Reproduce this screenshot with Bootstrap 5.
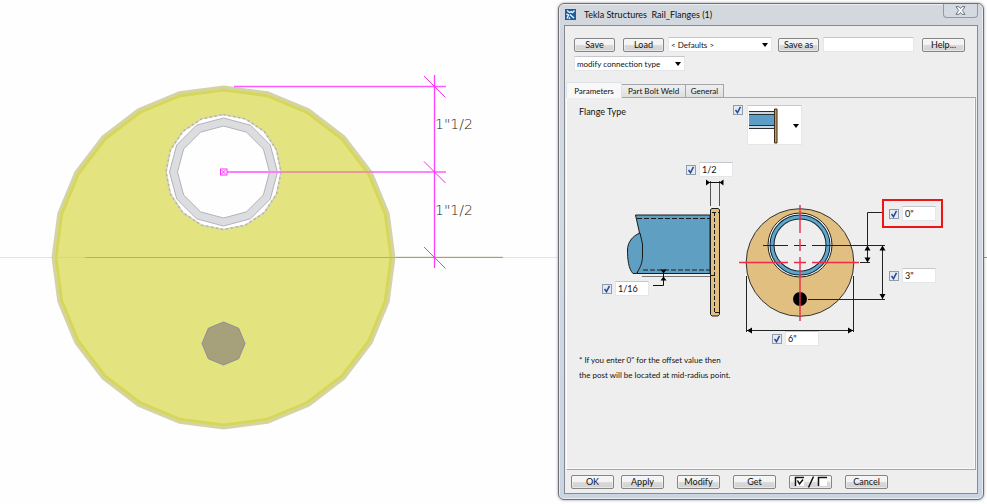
<!DOCTYPE html>
<html lang="en">
<head>
<meta charset="utf-8">
<meta name="viewport" content="width=device-width, initial-scale=1">
<title>Tekla Structures Rail_Flanges (1)</title>
<link href="https://cdn.jsdelivr.net/npm/bootstrap@5.3.0/dist/css/bootstrap.min.css" rel="stylesheet">
<style>
  body { background: #fefefe; color: #111; font: 9px/14px Lato, sans-serif; }
  .workspace { min-height: 100vh; }
  .model-view { flex: 558 1 0; min-width: 0; }
  .model-view svg { width: 100%; height: 100vh; }
  .dialog-side { flex: 429 1 0; min-width: 429px; }
  .dialog-side::after { content: ""; position: absolute; right: 0; top: 257px; width: 3px; height: 1px; background: #e85a8a; }
  .dlg { margin: 3px 3px 4px 0; border: 1px solid #6c7076; border-radius: 6px; padding: 0 5px 5px; background: linear-gradient(#d3d7de, #d3dae3 40%, #c9d5e2); box-shadow: 0 0 3px #9a9a9a, inset 0 0 0 1px #e9edf2; }
  .title-bar { height: 21px; padding-left: 1px; }
  .title-bar h1 { font-size: 9px; line-height: 14px; font-weight: 400; white-space: pre; }
  .close-btn { width: 35px; height: 14px; border: 1px solid #8f9aa8; border-top: 0; border-radius: 0 0 4px 4px; background: #d5dae2; }
  .client { border: 1px solid #858a92; background: #eee; padding: 11px 1px 4px; }
  .tool-row { padding: 0 11px 0 8px; }
  .ui-btn { --bs-btn-padding-x: 0; --bs-btn-padding-y: 0; --bs-btn-font-size: 9px; --bs-btn-line-height: 12px; --bs-btn-border-radius: 2px; --bs-btn-border-color: #858585; --bs-btn-color: #111; height: 14px; width: 43px; background: linear-gradient(#f4f4f4 45%, #d9d9d9 55%, #d2d2d2); box-shadow: inset 0 0 0 1px #fafafa88; display: inline-flex; align-items: center; justify-content: center; }
  .top-btn { width: 41px; }
  .ui-select, .ui-field { height: 15px; min-height: 0; border: 1px solid #e4e6e9; border-top-color: #c4c8cd; border-radius: 0; background-color: #fff; color: #111; font-size: 9px; line-height: 12px; padding: 0 2px; }
  .ui-select { font-size: 8px; background-image: url("data:image/svg+xml,%3Csvg xmlns='http://www.w3.org/2000/svg' viewBox='0 0 6 4'%3E%3Cpath d='M0 0h6L3 4z' fill='%23000'/%3E%3C/svg%3E"); background-position: right 3px center; background-size: 6px 4px; padding-right: 12px; }
  .sel-defaults { width: 104px; }
  .sel-modify { width: 111px; }
  .field-save { width: 91px; }
  .tab-strip { padding: 11px 0 0 0; border: 0; }
  .tab-strip .nav-link { min-width: 39px; border: 1px solid #a3a6ab; border-bottom: 0; border-radius: 0; margin: 2px 0 0 -1px; padding: 0 4px; height: 13px; font-size: 8px; line-height: 13px; color: #111; background: linear-gradient(#f0f0f0, #dedede); }
  .tab-strip .nav-link.active { position: relative; min-width: 56px; height: 16px; margin: 0 0 -1px; line-height: 14px; background: #f8f8f8; color: #111; }
  .tab-strip .tab-wide { min-width: 65px; }
  .tab-page { border: 1px solid #a3a6ab; border-left-color: #fff; box-shadow: inset -1px -1px #fafafa; background: #eee; }
  .flange-row { padding: 7px 12px 0; height: 52px; }
  .flange-row .flange-name { width: 154px; }
  .ui-check.ui-check[type=checkbox] { width: 10px; height: 10px; flex: none; border: 1px solid #929baa; border-radius: 0; background-color: #e4eaf3; }
  .dim .ui-check { margin: 0; }
  .ui-check.ui-check[type=checkbox]:checked { background-size: 8px 8px; background-image: url("data:image/svg+xml,%3Csvg xmlns='http://www.w3.org/2000/svg' viewBox='0 0 8 8'%3E%3Cpath d='M1.5 4l2 2.700L6.500.8' fill='none' stroke='%23284a94' stroke-width='1.500'/%3E%3C/svg%3E"); }
  .type-picker { width: 55px; height: 40px; padding: 0; border: 1px solid #e4e6e9; border-top-color: #c4c8cd; background: #fff; }
  .stage { width: 400px; height: 200px; }
  .dim { position: absolute; display: flex; align-items: center; gap: 3px; }
  .dim .ui-field { width: 34px; }
  .dim-plate { left: 119px; top: 12px; }
  .dim-gap { left: 35px; top: 131px; }
  .dim-offset { left: 315px; top: 49px; padding: 5px; border: 2px solid #f01414; }
  .dim-bolt { left: 322px; top: 118px; }
  .dim-dia { left: 205px; top: 181px; }
  .hint { padding: 3px 12px; font-size: 8px; line-height: 15px; }
  .footer-row { padding: 5px 5px 0; gap: 13px; }
  .footer-pair { gap: 7px; }
  .cad-text { font: 14px "DejaVu Sans Light", "DejaVu Sans", sans-serif; fill: #222; }
</style>
<script src="https://cdn.jsdelivr.net/npm/bootstrap@5.3.0/dist/js/bootstrap.bundle.min.js"></script>
</head>
<body>
<div class="workspace d-flex">
  <main class="model-view">
    <svg class="d-block" viewBox="0 0 558 504" preserveAspectRatio="xMinYMin meet" role="img" aria-label="Flange model view">
      <path d="M0 257.5H558" stroke="#e3e3e3"/>
      <g id="plate"></g>
      <path d="M85 257.5H396" stroke="#d9a552"/><path d="M396 257.5H503" stroke="#ec7a74"/>
      <path d="M396 256.5H503" stroke="#e8e2d0" opacity=".6"/>
      <path d="M234 86.5H446M372 172H446" stroke="#ff5cff" stroke-width="1.5"/>
      <path d="M227 172H281" stroke="#ff7cff" stroke-width="2"/>
      <path d="M281 172H372" stroke="#e59c94" stroke-width="2"/>
      <path d="M434.5 75V268" stroke="#ff40ff" stroke-width="1.3"/>
      <path d="M424 76l21.500 21.500M424 161.500l21.500 21.500M424 247l21.500 21.500" stroke="#f22cf2"/>
      <g fill="none" stroke="#ff30ff"><rect x="220.500" y="169" width="6.500" height="6"/><path d="M221.500 170l4 4M225.500 170l-4 4"/></g>
      <text class="cad-text" x="435" y="129">1"1/2</text>
      <text class="cad-text" x="435" y="215">1"1/2</text>
    </svg>
  </main>

  <section class="dialog-side d-flex position-relative" aria-label="Rail flanges dialog">
    <div class="dlg d-flex flex-column flex-grow-1">
      <header class="title-bar d-flex justify-content-between">
        <div class="d-flex align-items-center gap-1">
          <svg width="11" height="11" viewBox="0 0 11 11" aria-hidden="true"><path fill="#1c5b9c" d="M0 0h11v11H0z"/><path d="M2 1.500l2.500 2L7 2.500M9.500 1.500L7 4M1.500 5l2 1-1.500 3.500M5 5.500l4 3.500M5 8.500L4 10" stroke="#e6f1fa" stroke-width="1.500" fill="none"/></svg>
          <h1 class="m-0 ps-1">Tekla Structures  Rail_Flanges (1)</h1>
        </div>
        <button type="button" class="close-btn p-0 d-flex align-items-center justify-content-center" aria-label="Close">
          <svg width="11" height="9" viewBox="0 0 11 9"><path d="M1 .7h3l1.500 1.800L7 .7h3L7.300 4.500 10 8.300H7L5.500 6.500 4 8.300H1l2.700-3.800z" fill="#fff" stroke="#5e6570" stroke-width=".9"/></svg>
        </button>
      </header>

      <div class="client d-flex flex-column flex-grow-1">
        <div class="tool-row d-flex align-items-center">
          <button type="button" class="btn ui-btn top-btn me-2">Save</button>
          <button type="button" class="btn ui-btn top-btn me-1">Load</button>
          <select class="form-select ui-select sel-defaults me-auto" aria-label="Settings file"><option>&lt; Defaults &gt;</option></select>
          <button type="button" class="btn ui-btn top-btn me-1">Save as</button>
          <input type="text" class="form-control ui-field field-save me-2" aria-label="Save as name">
          <button type="button" class="btn ui-btn">Help...</button>
        </div>
        <div class="tool-row pt-1 d-flex">
          <select class="form-select ui-select sel-modify" aria-label="Modify mode"><option>modify connection type</option></select>
        </div>

        <ul class="nav nav-tabs tab-strip" role="tablist">
          <li class="nav-item"><button type="button" class="nav-link active" role="tab" aria-selected="true">Parameters</button></li>
          <li class="nav-item"><button type="button" class="nav-link tab-wide" role="tab" aria-selected="false">Part Bolt Weld</button></li>
          <li class="nav-item"><button type="button" class="nav-link" role="tab" aria-selected="false">General</button></li>
        </ul>

        <div class="tab-page flex-grow-1" role="tabpanel">
          <div class="flange-row d-flex">
            <label class="flange-name" for="useType">Flange Type</label>
            <input type="checkbox" class="form-check-input ui-check mt-0 me-1" id="useType" checked>
            <button type="button" class="type-picker" aria-label="Flange type picture" aria-haspopup="listbox">
              <svg class="d-block" width="53" height="38" viewBox="0 0 53 38">
                <path d="M1 5h26v18H1z" fill="#c9d9e2"/><path d="M1 9h26v10H1z" fill="#5b9fc6"/>
                <path d="M1 5.500h26M1 8.500h26M1 19.500h26M1 22.500h26" stroke="#2a2f33" stroke-width="1.200"/>
                <path d="M26.500 3h2.500v34h-2.500z" fill="#c99a56" stroke="#3a2c18"/>
                <path d="M45 18h6l-3 4z"/>
              </svg>
            </button>
          </div>

          <div class="stage position-relative">
            <svg class="d-block" width="400" height="200" viewBox="567 150 400 200" aria-hidden="true">
              <g stroke="#1a1a1a" fill="#5fa0c2">
                <path d="M635.500 215H710v58.500H637l5.500-18-3.500-25z"/>
                <path d="M640 233c-8 3-12.500 10-12.500 17 0 9 1 19 5.500 23.500h3.500C640 268 642.500 263 642.500 256V244z"/>
                <path d="M637 218.500H710M643 270H710" stroke-dasharray="5 2" fill="none"/>
              </g>
              <path d="M642 276.500H712" stroke="#777"/>
              <path d="M710.500 209.500l1.500-1h6l1.500 1v105l-1.500 1.500h-6l-1.500-1.500z" fill="#e1bf80" stroke="#1a1a1a"/>
              <path d="M714.500 212V314M712 212.500h7M711 275.500h3M715 312.500h4" stroke="#1a1a1a" stroke-dasharray="4 2"/>
              <path d="M710.500 181V206M719.500 181V206" stroke="#555"/>
              <path d="M707 182.500H723M663.500 270V285.500H653M660 273.500h7" stroke="#111" fill="none"/>
              <path d="M706 179.500l4 3-4 3zM723.500 179.500l-4 3 4 3zM660.500 269.500h6l-3 4zM660.500 280.500h6l-3-4z"/>
              <circle cx="800" cy="262.500" r="53.800" fill="#e1bf80" stroke="#333"/>
              <circle cx="800" cy="245" r="32" fill="#fff" stroke="#222"/>
              <circle cx="800" cy="245" r="28" fill="#eee" stroke="#16242e" stroke-width="5"/>
              <circle cx="800" cy="245" r="28" fill="none" stroke="#5fa6cc" stroke-width="3"/>
              <circle cx="800" cy="299" r="7"/>
              <path d="M763 245.500H788M794 245.500H806M812 245.500H885M808 299.500H885M860 262.500H870M882 212.500H867.500V262M882.500 246V299M746.500 276V332M853.500 276V332M747 330.500H853" stroke="#222" fill="none"/>
              <path d="M864.500 250.500h6l-3-5zM864.500 257.500h6l-3 5zM879.500 250.500h6l-3-5zM879.500 294h6l-3 5zM752 327.500v6l-5-3zM848 327.500v6l5-3z"/>
              <path d="M739 262.500H788M794 262.500H806M812 262.500H859M800 205V233M800 239V251M800 257V321" stroke="#ee2c48" stroke-width="1.400"/>
            </svg>
            <div class="dim dim-plate"><input type="checkbox" class="form-check-input ui-check" checked aria-label="Use plate thickness"><input type="text" class="form-control ui-field" value="1/2" aria-label="Plate thickness"></div>
            <div class="dim dim-gap"><input type="checkbox" class="form-check-input ui-check" checked aria-label="Use clearance"><input type="text" class="form-control ui-field" value="1/16" aria-label="Clearance"></div>
            <div class="dim dim-offset"><input type="checkbox" class="form-check-input ui-check" checked aria-label="Use offset"><input type="text" class="form-control ui-field" value='0"' aria-label="Offset"></div>
            <div class="dim dim-bolt"><input type="checkbox" class="form-check-input ui-check" checked aria-label="Use bolt distance"><input type="text" class="form-control ui-field" value='3"' aria-label="Bolt distance"></div>
            <div class="dim dim-dia"><input type="checkbox" class="form-check-input ui-check" checked aria-label="Use flange diameter"><input type="text" class="form-control ui-field" value='6"' aria-label="Flange diameter"></div>
          </div>
          <p class="hint m-0">* If you enter 0" for the offset value then<br>the post will be located at mid-radius point.</p>
        </div>

        <footer class="footer-row d-flex">
          <div class="footer-pair d-flex">
            <button type="button" class="btn ui-btn">OK</button>
            <button type="button" class="btn ui-btn">Apply</button>
          </div>
          <button type="button" class="btn ui-btn">Modify</button>
          <button type="button" class="btn ui-btn">Get</button>
          <button type="button" class="btn ui-btn" aria-label="Toggle all switches">
            <svg width="34" height="12" viewBox="0 0 34 12"><path d="M2 2h8v8H2zM25 2h8v8h-8z" fill="#fff"/><path d="M1.500 10V1.500H10M24.500 10V1.500H33M3.500 4.500L5.500 8 9 3.500M14.500 11.500L19.500.5" fill="none" stroke="#111" stroke-width="1.500"/></svg>
          </button>
          <button type="button" class="btn ui-btn">Cancel</button>
        </footer>
      </div>
    </div>
  </section>
</div>
<script>
  // Round parts are drawn as regular polygons, first vertex at the top.
  const polygon = (cx, cy, r, n, style) => {
    const points = Array.from({ length: n }, (_, i) => {
      const a = 2 * Math.PI * i / n;
      return (cx + r * Math.sin(a)).toFixed(2) + ',' + (cy - r * Math.cos(a)).toFixed(2);
    }).join(' ');
    return `<polygon points="${points}" ${style}/>`;
  };
  document.getElementById('plate').innerHTML =
    polygon(223.5, 257.5, 170.5, 24, 'fill="#e3e47f" stroke="#d3d3a6" stroke-width="3"') +
    polygon(223.5, 257.5, 167.5, 24, 'fill="#e3e47f" stroke="#d6d75a" stroke-width="3"') +
    '<path d="M58 257.5H396" stroke="#d8da76"/>' +
    polygon(223.5, 172, 57.5, 16, 'fill="#fefefe" stroke="#d0d0d0" stroke-width="1.5"') +
    polygon(223.5, 172, 57.5, 16, 'fill="none" stroke="#b9b48c" stroke-width="1.5" stroke-dasharray="2 3"') +
    polygon(223.5, 172, 54, 12, 'fill="#dcdde0" stroke="#b4b4b4"') +
    polygon(223.5, 172, 46, 12, 'fill="#fefefe" stroke="#b4b4b4"') +
    polygon(223.5, 343.5, 21.5, 8, 'fill="#a6a17b" stroke="#8f8f93"');
</script>
</body>
</html>
